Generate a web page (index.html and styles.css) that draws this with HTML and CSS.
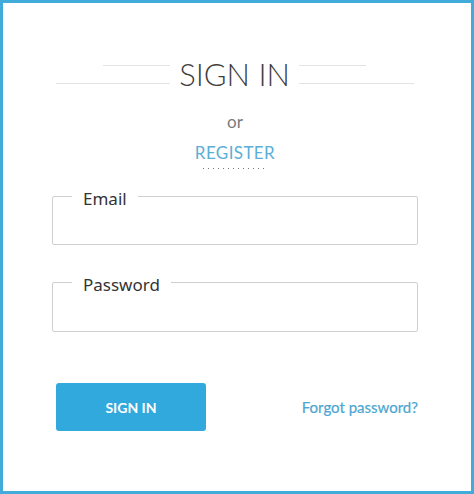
FILE: index.html
```html
<!DOCTYPE html>
<html lang="en">
<head>
<meta charset="utf-8">
<title>Sign in</title>
<link rel="stylesheet" href="styles.css">
</head>
<body>
<div class="frame">
  <form class="card">
    <div class="title-row">
      <div class="rule rule-left"><span class="short"></span><span class="long"></span></div>
      <h1 class="title">SIGN IN</h1>
      <div class="rule rule-right"><span class="short"></span><span class="long"></span></div>
    </div>
    <p class="or">or</p>
    <a class="register" href="#">REGISTER</a>
    <fieldset class="field field-email">
      <legend>Email</legend>
      <input type="email" aria-label="Email">
    </fieldset>
    <fieldset class="field field-password">
      <legend>Password</legend>
      <input type="password" aria-label="Password">
    </fieldset>
    <div class="actions">
      <button type="button" class="btn">SIGN IN</button>
      <a class="forgot" href="#">Forgot password?</a>
    </div>
  </form>
</div>
</body>
</html>
```
FILE: styles.css
```css
* { box-sizing: border-box; }
html, body { margin: 0; padding: 0; background: #fff; }
body { font-family: Lato, "Noto Sans", "Liberation Sans", sans-serif; }

.frame {
  width: 474px;
  height: 494px;
  border: 3px solid #41abd9;
  padding: 53px 0 0 49px;
}

.card {
  width: 366px;
  display: flex;
  flex-direction: column;
  align-items: center;
}

.title-row {
  display: flex;
  justify-content: center;
  align-items: flex-start;
  width: 100%;
}
.rule {
  display: flex;
  flex-direction: column;
  padding-top: 9px;
  gap: 17px;
}
.rule span { display: block; height: 1px; background: #e3e3e3; }
.rule-left { width: 114px; align-items: flex-end; }
.rule-right { width: 115px; align-items: flex-start; }
.rule .short { width: 67px; }
.rule .long { width: 100%; }

.title {
  margin: 0 9px;
  font-family: Lato, "Noto Sans", sans-serif;
  font-weight: 300;
  font-size: 31px;
  line-height: 36px;
  color: #3f3f3f;
  white-space: nowrap;
}

.or {
  margin: 20px 0 0;
  font-size: 17px;
  line-height: 20px;
  color: #7a7a7a;
}

.register {
  position: relative;
  margin-top: 11px;
  padding-bottom: 6px;
  font-size: 17px;
  line-height: 20px;
  color: #5aafd6;
  text-decoration: none;
  letter-spacing: 0.4px;
}
.register::after {
  content: "";
  position: absolute;
  left: 8px;
  right: 7px;
  bottom: 0;
  height: 1px;
  background: repeating-linear-gradient(to right, #777 0 1px, transparent 1px 5px);
}

.field {
  width: 366px;
  margin: 14px 0 0;
  padding: 0 19px;
  border: 1px solid #cfcfcf;
  border-radius: 2px;
  min-width: 0;
}
.field-password { margin-top: 24px; }
.field legend {
  padding: 6px 11px 0;
  font-family: "Noto Sans", Lato, sans-serif;
  font-size: 17px;
  line-height: 20px;
  color: #333;
}
.field input {
  display: block;
  width: 100%;
  height: 35px;
  border: 0;
  outline: none;
  background: transparent;
  font: inherit;
}
.field-password input { height: 36px; }

.actions {
  width: 100%;
  display: flex;
  justify-content: space-between;
  align-items: center;
  margin-top: 51px;
}
.btn {
  margin-left: 4px;
  width: 150px;
  height: 48px;
  border: 0;
  border-radius: 3px;
  background: #31a9dc;
  color: #fff;
  font-family: Lato, "Noto Sans", sans-serif;
  font-weight: 700;
  font-size: 14px;
  cursor: pointer;
}
.forgot {
  font-size: 15px;
  color: #4ba6d0;
  text-decoration: none;
  -webkit-text-stroke: 0.2px #4ba6d0;
}
```
